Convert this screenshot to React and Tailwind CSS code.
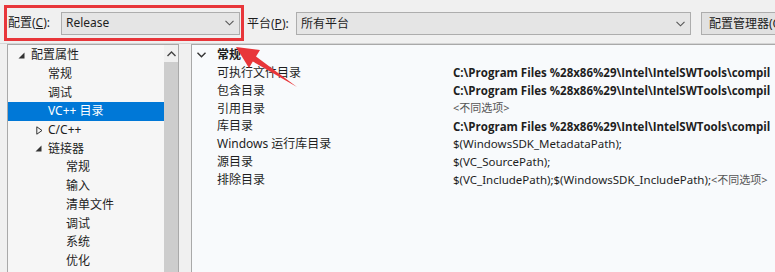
import React from "react";

const font = { fontFamily: '"Noto Sans", "Noto Sans CJK SC", sans-serif' };

function Chevron({ className = "" }) {
  return (
    <svg width="9" height="6" viewBox="0 0 9 6" className={className}>
      <path d="M0.5 0.8 L4.5 4.8 L8.5 0.8" fill="none" stroke="#555" strokeWidth="1.1" />
    </svg>
  );
}

const treeRows = [
  { t: "配置属性", indent: 31, icon: "down" },
  { t: "常规", indent: 48 },
  { t: "调试", indent: 48 },
  { t: "VC++ 目录", indent: 48, sel: true },
  { t: "C/C++", indent: 48, icon: "right" },
  { t: "链接器", indent: 48, icon: "down" },
  { t: "常规", indent: 66 },
  { t: "输入", indent: 66 },
  { t: "清单文件", indent: 66 },
  { t: "调试", indent: 66 },
  { t: "系统", indent: 66 },
  { t: "优化", indent: 66 },
];

const props = [
  ["可执行文件目录", "C:\\Program Files %28x86%29\\Intel\\IntelSWTools\\compil", "bold"],
  ["包含目录", "C:\\Program Files %28x86%29\\Intel\\IntelSWTools\\compil", "bold"],
  ["引用目录", "<不同选项>", "muted"],
  ["库目录", "C:\\Program Files %28x86%29\\Intel\\IntelSWTools\\compil", "bold"],
  ["Windows 运行库目录", "$(WindowsSDK_MetadataPath);", ""],
  ["源目录", "$(VC_SourcePath);", ""],
  ["排除目录", "$(VC_IncludePath);$(WindowsSDK_IncludePath);", "mixed"],
];

export default function App() {
  return (
    <div className="relative h-[272px] w-[775px] overflow-hidden bg-[#f0f0f0] text-[12px] text-[#1e1e1e]" style={font}>
      {/* Top bar */}
      <div className="flex h-[44px] items-start border-b border-[#d5d5d5]">
        <div className="ml-[4px] mt-[5px] flex h-[36px] w-[240px] shrink-0 items-center border-[3px] border-[#e8363a] pl-[1px]">
          <span className="w-[53px] whitespace-nowrap">
            配置(<span className="underline">C</span>):
          </span>
          <div className="flex h-[23px] w-[179px] items-center justify-between border border-[#adadad] bg-[#e5e5e5] pl-[4px] pr-[5px]">
            <span>Release</span>
            <Chevron />
          </div>
        </div>
        <div className="ml-[3px] mt-[12px] flex h-[23px] items-center">
          <span className="w-[49px] whitespace-nowrap">
            平台(<span className="underline">P</span>):
          </span>
          <div className="flex h-[23px] w-[395px] shrink-0 items-center justify-between border border-[#adadad] bg-[#e5e5e5] pl-[4px] pr-[5px]">
            <span>所有平台</span>
            <Chevron />
          </div>
          <div className="ml-[10px] flex h-[23px] w-[100px] shrink-0 items-center whitespace-nowrap border border-[#adadad] bg-[#e1e1e1] pl-[7px]">
            配置管理器(O
          </div>
        </div>
      </div>

      {/* Body */}
      <div className="flex h-[228px] pl-[7px]">
        {/* Left tree */}
        <div className="flex w-[172px] shrink-0 border-l border-t border-r border-[#a9a9a9] bg-[#f6f6f6]">
          <div className="flex-1 pt-[1px]">
            {treeRows.map((r, i) => (
              <div
                key={i}
                className={`relative flex h-[18.7px] items-center whitespace-nowrap ${r.sel ? "bg-[#0078d7] text-white" : ""}`}
                style={{ paddingLeft: r.indent - 8 }}
              >
                {r.icon === "down" && (
                  <svg width="7" height="7" viewBox="0 0 7 7" className="absolute" style={{ left: r.indent - 21 }}>
                    <path d="M6.5 0.5 L6.5 6.5 L0.5 6.5 Z" fill="#333" />
                  </svg>
                )}
                {r.icon === "right" && (
                  <svg width="7" height="9" viewBox="0 0 7 9" className="absolute" style={{ left: r.indent - 20 }}>
                    <path d="M0.8 0.8 L6 4.5 L0.8 8.2 Z" fill="none" stroke="#333" strokeWidth="1" />
                  </svg>
                )}
                <span>{r.t}</span>
              </div>
            ))}
          </div>
          <div className="flex w-[14px] flex-col bg-[#f0f0f0]">
            <div className="flex h-[17px] items-center justify-center">
              <svg width="9" height="6" viewBox="0 0 9 6">
                <path d="M0.5 5 L4.5 1 L8.5 5" fill="none" stroke="#444" strokeWidth="1.4" />
              </svg>
            </div>
            <div className="flex-1 bg-[#cdcdcd]" />
          </div>
        </div>

        {/* Right grid */}
        <div className="ml-[12px] min-w-0 flex-1 overflow-hidden border-l border-t border-[#a9a9a9] bg-[#f8fafc] pt-[1px]">
          <div className="relative flex h-[18px] items-center pl-[25px] font-bold">
            <svg width="9" height="6" viewBox="0 0 9 6" className="absolute left-[5px]">
              <path d="M0.5 0.8 L4.5 4.8 L8.5 0.8" fill="none" stroke="#333" strokeWidth="1.4" />
            </svg>
            常规
          </div>
          {props.map(([n, v, k], i) => (
            <div key={i} className="flex h-[17.8px] items-center whitespace-nowrap">
              <span className="w-[261px] shrink-0 pl-[25px]">{n}</span>
              {k === "bold" && (
                <span className="text-[11.5px] font-bold" style={{ fontFamily: '"Open Sans", "Noto Sans CJK SC", sans-serif' }}>{v}</span>
              )}
              {k === "muted" && <span className="text-[11px] text-[#555]">{v}</span>}
              {k === "" && <span className="text-[11.5px]">{v}</span>}
              {k === "mixed" && (
                <span className="text-[11.5px]">
                  {v}
                  <span className="text-[11px] text-[#555]">&lt;不同选项&gt;</span>
                </span>
              )}
            </div>
          ))}
        </div>
      </div>

      {/* Red annotation arrow */}
      <svg className="pointer-events-none absolute left-0 top-0" width="775" height="272">
        <polygon
          points="236,47 260,50 256,56.5 297,87 252.8,61.5 249,68"
          fill="#e8363a"
        />
      </svg>
    </div>
  );
}
